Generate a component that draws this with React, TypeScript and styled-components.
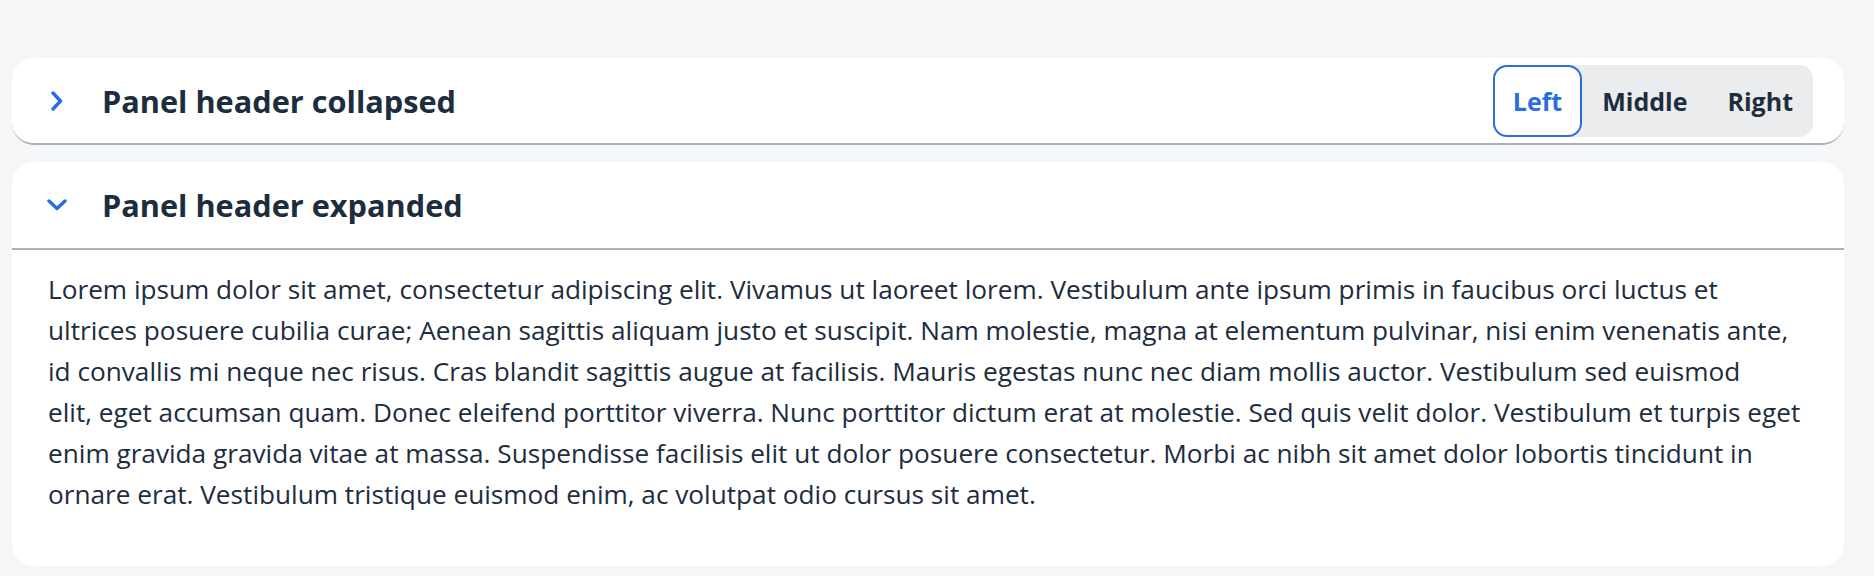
import React, { useState } from "react";
import styled, { createGlobalStyle, css } from "styled-components";

const FONT = `"Open Sans", "Noto Sans", Arial, sans-serif`;

const GlobalStyle = createGlobalStyle`
  html, body {
    margin: 0;
    padding: 0;
    background: #f5f6f7;
  }
  body {
    font-family: ${FONT};
    color: #1d2d3e;
  }
`;

const Page = styled.main`
  display: flex;
  flex-direction: column;
  gap: 17px;
  padding: 58px 30px 10px 12px;
  box-sizing: border-box;
`;

const Panel = styled.section<{ $expanded: boolean }>`
  background: #ffffff;
  border-radius: 22px;
  overflow: hidden;
  ${(p) =>
    !p.$expanded &&
    css`
      border-bottom: 2px solid #a8b2bd;
    `}
`;

const Header = styled.div<{ $expanded: boolean }>`
  display: flex;
  align-items: center;
  height: 85px;
  padding: 0 31px 0 24px;
  box-sizing: content-box;
  ${(p) =>
    p.$expanded &&
    css`
      height: 86px;
      border-bottom: 2px solid #a8b2bd;
    `}
`;

const Toggle = styled.button`
  display: flex;
  align-items: center;
  justify-content: center;
  width: 42px;
  height: 42px;
  padding: 0;
  border: none;
  background: transparent;
  cursor: pointer;
`;

const Chevron = styled.svg<{ $expanded: boolean }>`
  width: 20px;
  height: 20px;
  transform: rotate(${(p) => (p.$expanded ? 90 : 0)}deg);
`;

const Title = styled.h2`
  flex: 1;
  margin: 0;
  padding-left: 24px;
  font-family: ${FONT};
  font-weight: 700;
  font-size: 30.7px;
  color: #1d2d3e;
`;

const Segmented = styled.div`
  display: flex;
  height: 72px;
  background: #eaecee;
  border-radius: 14px;
`;

const SegItem = styled.button<{ $selected: boolean }>`
  height: 72px;
  padding: 0 18px;
  border: 2px solid transparent;
  border-radius: 14px;
  background: transparent;
  font-family: ${FONT};
  font-weight: 700;
  font-size: 25px;
  color: #1d2d3e;
  cursor: pointer;
  ${(p) =>
    p.$selected &&
    css`
      background: #ffffff;
      border-color: #2a6de0;
      color: #2a6de0;
    `}
`;

const Content = styled.p`
  margin: 0;
  padding: 19px 30px 51px 36px;
  font-family: ${FONT};
  font-size: 26.2px;
  line-height: 41px;
  color: #1d2d3e;
  white-space: nowrap;
`;

const ChevronIcon = ({ expanded }: { expanded: boolean }) => (
  <Chevron $expanded={expanded} viewBox="0 0 20 20" aria-hidden>
    <path
      d="M6 2 L13.5 10 L6 18"
      fill="none"
      stroke="#2a6de0"
      strokeWidth={3.4}
      strokeLinecap="round"
      strokeLinejoin="round"
    />
  </Chevron>
);

const LINES = [
  "Lorem ipsum dolor sit amet, consectetur adipiscing elit. Vivamus ut laoreet lorem. Vestibulum ante ipsum primis in faucibus orci luctus et",
  "ultrices posuere cubilia curae; Aenean sagittis aliquam justo et suscipit. Nam molestie, magna at elementum pulvinar, nisi enim venenatis ante,",
  "id convallis mi neque nec risus. Cras blandit sagittis augue at facilisis. Mauris egestas nunc nec diam mollis auctor. Vestibulum sed euismod",
  "elit, eget accumsan quam. Donec eleifend porttitor viverra. Nunc porttitor dictum erat at molestie. Sed quis velit dolor. Vestibulum et turpis eget",
  "enim gravida gravida vitae at massa. Suspendisse facilisis elit ut dolor posuere consectetur. Morbi ac nibh sit amet dolor lobortis tincidunt in",
  "ornare erat. Vestibulum tristique euismod enim, ac volutpat odio cursus sit amet.",
];

const Lorem = () => (
  <Content>
    {LINES.map((line, i) => (
      <React.Fragment key={i}>
        {line}
        {i < LINES.length - 1 && <br />}
      </React.Fragment>
    ))}
  </Content>
);

export default function App() {
  const [seg, setSeg] = useState("Left");
  const [first, setFirst] = useState(false);
  const [second, setSecond] = useState(true);

  return (
    <>
      <GlobalStyle />
      <Page>
        <Panel $expanded={first}>
          <Header $expanded={first}>
            <Toggle onClick={() => setFirst(!first)} aria-label="Toggle">
              <ChevronIcon expanded={first} />
            </Toggle>
            <Title>Panel header collapsed</Title>
            <Segmented>
              {["Left", "Middle", "Right"].map((s) => (
                <SegItem key={s} $selected={seg === s} onClick={() => setSeg(s)}>
                  {s}
                </SegItem>
              ))}
            </Segmented>
          </Header>
          {first && <Lorem />}
        </Panel>
        <Panel $expanded={second}>
          <Header $expanded={second}>
            <Toggle onClick={() => setSecond(!second)} aria-label="Toggle">
              <ChevronIcon expanded={second} />
            </Toggle>
            <Title>Panel header expanded</Title>
          </Header>
          {second && <Lorem />}
        </Panel>
      </Page>
    </>
  );
}
